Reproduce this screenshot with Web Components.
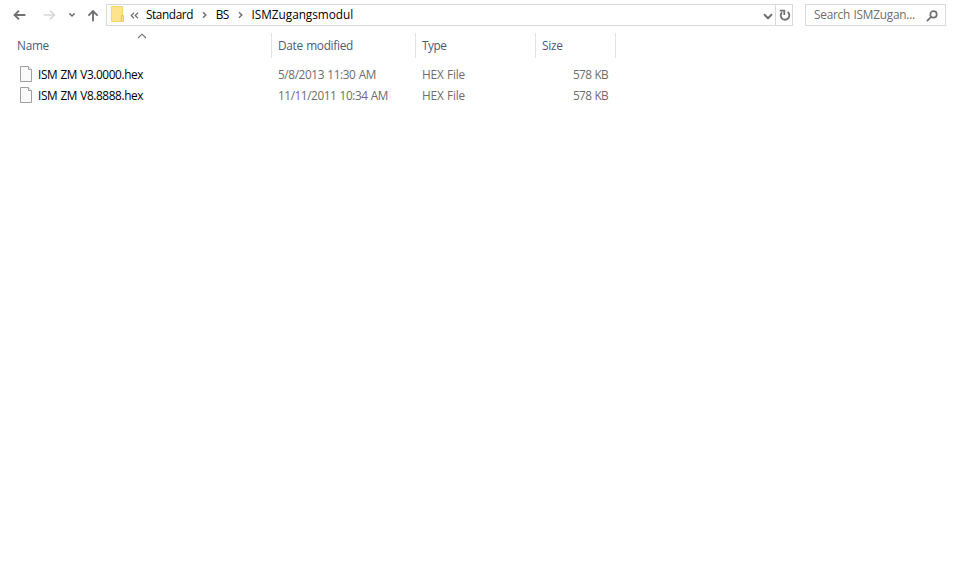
<!DOCTYPE html>
<html lang="en">
<head>
<meta charset="utf-8">
<title>ISMZugangsmodul</title>
<style>
    body {
        margin: 0;
        background: #fff;
        font: 12px/20px "Open Sans", "Noto Sans", sans-serif;
        color: #000;
    }
</style>
</head>
<body>
<file-explorer></file-explorer>

<script>
// Line icons, stroked with the current colour
const ICONS = {
    back: { w: 13, h: 12, d: 'M12.4 6H1.6M6 1.6L1.5 6 6 10.4', s: 1.9 },
    forward: { w: 13, h: 12, d: 'M.6 6h10.8M7 1.6L11.5 6 7 10.4', s: 1.6 },
    recent: { w: 8, h: 6, d: 'M1.4 1.4L4 4l2.6-2.6', s: 1.5 },
    up: { w: 12, h: 13, d: 'M6 12.3V2.2M1.4 6.6L6 2l4.6 4.6', s: 1.9 },
    overflow: { w: 9, h: 7, d: 'M4 .8L1.2 3.5 4 6.2M8 .8L5.2 3.5 8 6.2', s: 1.2 },
    crumb: { w: 5, h: 8, d: 'M1 1.2L3.8 4 1 6.8', s: 1.5 },
    drop: { w: 10, h: 7, d: 'M1 1.3l4 4 4-4', s: 2 },
    refresh: { w: 12, h: 12, d: 'M8.6 3A4.3 4.3 0 1 1 3 3.4M.8 1.7h4.5v4.2', s: 1.8 },
    search: { w: 12, h: 12, d: 'M4.8 7.2L.9 11.1M4.3 4.4a3.2 3.2 0 1 1 6.4 0a3.2 3.2 0 1 1-6.4 0z', s: 1.7 },
    sort: { w: 10, h: 6, d: 'M1 5l4-3.8L9 5', s: 1.1 }
};

class LineIcon extends HTMLElement {
    connectedCallback() {
        const icon = ICONS[this.getAttribute('name')];
        this.attachShadow({ mode: 'open' }).innerHTML = `
            <style>
                :host { display: block; flex: none; color: #707070; }
                svg { display: block; }
            </style>
            <svg width="${icon.w}" height="${icon.h}" viewBox="0 0 ${icon.w} ${icon.h}">
                <path d="${icon.d}" fill="none" stroke="currentColor" stroke-width="${icon.s}"/>
            </svg>
        `;
    }
}

// Label whose letters are spaced to fill a given width
class FitLabel extends HTMLElement {
    connectedCallback() {
        this.attachShadow({ mode: 'open' }).innerHTML = `
            <style>
                :host { display: block; flex: none; white-space: nowrap; }
                span { display: inline-block; font-size: 11.8px; word-spacing: .6px; }
            </style>
            <span><slot></slot></span>
        `;
        const span = this.shadowRoot.querySelector('span');
        const width = Number(this.getAttribute('width'));
        const spacing = (width - span.getBoundingClientRect().width) / this.textContent.length;
        span.style.letterSpacing = `${spacing}px`;
        this.style.width = `${width}px`;
    }
}

class AddressBar extends HTMLElement {
    connectedCallback() {
        this.attachShadow({ mode: 'open' }).innerHTML = `
            <style>
                :host {
                    display: flex;
                    box-sizing: border-box;
                    height: 22px;
                    border: 1px solid #d9d9d9;
                }
                .path { flex: 1; display: flex; align-items: center; padding-left: 4px; }
                .folder { display: block; margin: -2px 6px 0 0; }
                .crumbs { display: flex; align-items: center; margin-left: 7px; }
                .crumbs line-icon { margin: 0 8.8px 0 9px; }
                .crumbs fit-label { margin-bottom: 2px; }
                line-icon[name="drop"] { margin: 2px 2px 0 0; }
                .refresh {
                    display: flex;
                    align-items: center;
                    justify-content: center;
                    width: 16px;
                    border-left: 1px solid #d9d9d9;
                }
                .refresh line-icon { margin-right: -1px; }
            </style>
            <div class="path">
                <svg class="folder" width="13" height="16" viewBox="0 0 13 16">
                    <path d="M.5.5h11v15H.5z" fill="#ffe38c" stroke="#f5d675"/>
                    <path d="M10.5 9.5h2v6h-2z" fill="#ffe38c" stroke="#edc95c"/>
                </svg>
                <line-icon name="overflow"></line-icon>
                <div class="crumbs">
                    <fit-label width="47">Standard</fit-label>
                    <line-icon name="crumb"></line-icon>
                    <fit-label width="13">BS</fit-label>
                    <line-icon name="crumb"></line-icon>
                    <fit-label width="101.5">ISMZugangsmodul</fit-label>
                </div>
                <span style="flex:1"></span>
                <line-icon name="drop"></line-icon>
            </div>
            <div class="refresh"><line-icon name="refresh"></line-icon></div>
        `;
    }
}

class SearchBox extends HTMLElement {
    connectedCallback() {
        this.attachShadow({ mode: 'open' }).innerHTML = `
            <style>
                :host {
                    display: flex;
                    align-items: center;
                    justify-content: space-between;
                    box-sizing: border-box;
                    width: 141px;
                    height: 22px;
                    padding: 0 7px 0 8px;
                    border: 1px solid #d9d9d9;
                    color: #6d6d6d;
                }
                ::slotted(fit-label) { margin-bottom: 2px; }
                line-icon { margin-top: 1px; }
            </style>
            <slot></slot>
            <line-icon name="search"></line-icon>
        `;
    }
}

class NavBar extends HTMLElement {
    connectedCallback() {
        this.attachShadow({ mode: 'open' }).innerHTML = `
            <style>
                :host { display: flex; align-items: center; height: 22px; padding: 4px 12px 0 12.5px; }
                line-icon[name="forward"] { margin-left: 17px; color: #d8d8d8; }
                line-icon[name="recent"] { margin-left: 12.5px; }
                line-icon[name="up"] { margin: 0 7px 0 11px; }
                address-bar { flex: 1; margin-right: 12px; }
            </style>
            <line-icon name="back"></line-icon>
            <line-icon name="forward"></line-icon>
            <line-icon name="recent"></line-icon>
            <line-icon name="up"></line-icon>
            <address-bar></address-bar>
            <search-box><fit-label width="101">Search ISMZugan...</fit-label></search-box>
        `;
    }
}

class ListHeader extends HTMLElement {
    connectedCallback() {
        this.attachShadow({ mode: 'open' }).innerHTML = `
            <style>
                :host {
                    display: grid;
                    grid-template-columns: 255px 144px 120px 80px;
                    height: 25px;
                    margin: 7px 0 0 17px;
                    color: #4c5a7e;
                }
                div {
                    position: relative;
                    display: flex;
                    align-items: center;
                    border-right: 1px solid #e2e2e2;
                }
                div + div { padding-left: 6px; }
                /* sort arrow sits over the top edge of the sorted column */
                line-icon { position: absolute; left: 119.5px; top: -.5px; }
            </style>
            <div><fit-label width="32">Name</fit-label><line-icon name="sort"></line-icon></div>
            <div><fit-label width="75">Date modified</fit-label></div>
            <div><fit-label width="24.5">Type</fit-label></div>
            <div><fit-label width="20.5">Size</fit-label></div>
        `;
    }
}

class FileRow extends HTMLElement {
    connectedCallback() {
        this.attachShadow({ mode: 'open' }).innerHTML = `
            <style>
                :host {
                    display: grid;
                    grid-template-columns: 258px 144px 120px 66px;
                    align-items: center;
                    height: 21px;
                    margin-left: 20px;
                    color: #6d6d6d;
                }
                .name { display: flex; align-items: center; gap: 6px; color: #000; }
                .size { display: flex; justify-content: flex-end; }
                svg { display: block; margin-top: -2px; }
            </style>
            <div class="name">
                <svg width="12" height="16" viewBox="0 0 12 16">
                    <path d="M.5.5h8l3 3v12H.5z" fill="#fafafa" stroke="#a0a0a0"/>
                    <path d="M8.5.5v3h3" fill="#fff" stroke="#a0a0a0"/>
                </svg>
                <slot name="name"></slot>
            </div>
            <slot name="date"></slot>
            <slot name="type"></slot>
            <div class="size"><slot name="size"></slot></div>
        `;
    }
}

class FileExplorer extends HTMLElement {
    connectedCallback() {
        this.attachShadow({ mode: 'open' }).innerHTML = `
            <style>
                :host { display: block; height: 584px; background: #fff; }
                .files { padding-top: 6px; }
            </style>
            <nav-bar></nav-bar>
            <list-header></list-header>
            <div class="files">
                <file-row>
                    <fit-label slot="name" width="105">ISM ZM V3.0000.hex</fit-label>
                    <fit-label slot="date" width="98">5/8/2013 11:30 AM</fit-label>
                    <fit-label slot="type" width="43">HEX File</fit-label>
                    <fit-label slot="size" width="35">578 KB</fit-label>
                </file-row>
                <file-row>
                    <fit-label slot="name" width="105">ISM ZM V8.8888.hex</fit-label>
                    <fit-label slot="date" width="110">11/11/2011 10:34 AM</fit-label>
                    <fit-label slot="type" width="43">HEX File</fit-label>
                    <fit-label slot="size" width="35">578 KB</fit-label>
                </file-row>
            </div>
        `;
    }
}

customElements.define('line-icon', LineIcon);
customElements.define('fit-label', FitLabel);
customElements.define('address-bar', AddressBar);
customElements.define('search-box', SearchBox);
customElements.define('nav-bar', NavBar);
customElements.define('list-header', ListHeader);
customElements.define('file-row', FileRow);
customElements.define('file-explorer', FileExplorer);
</script>
</body>
</html>
